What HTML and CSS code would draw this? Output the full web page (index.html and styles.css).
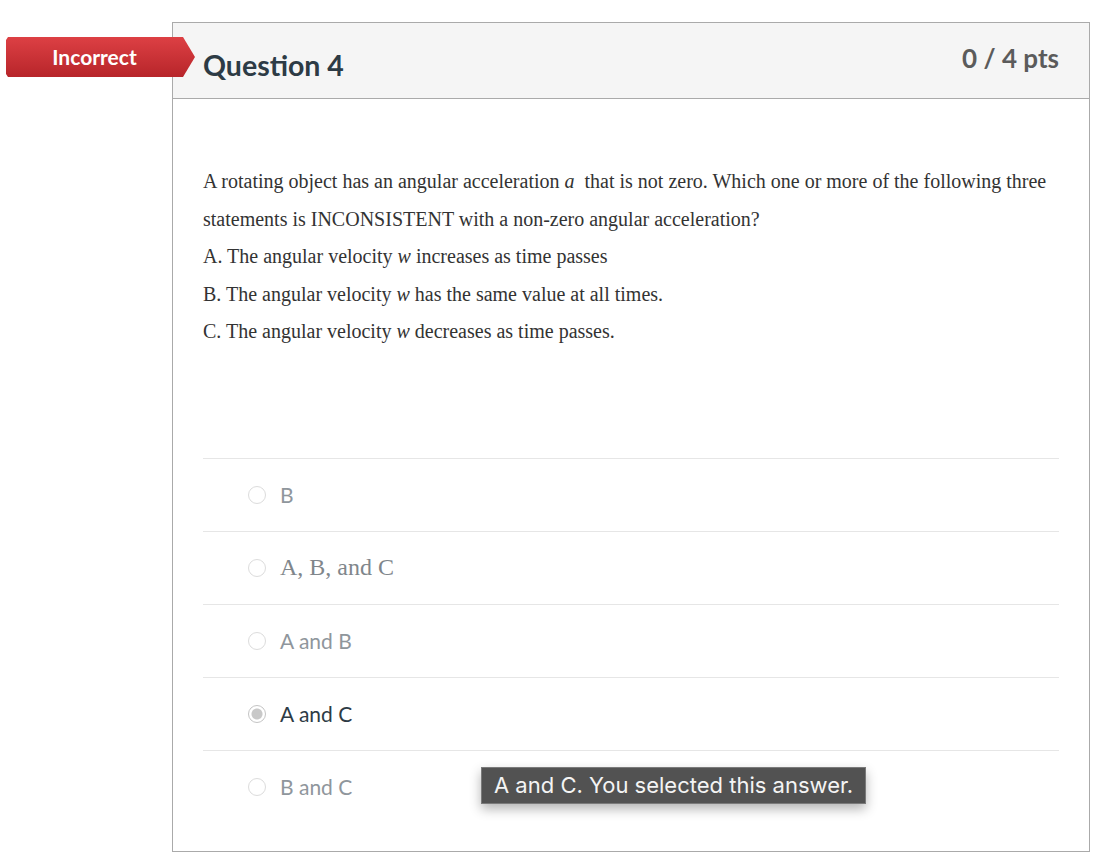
FILE: index.html
```html
<!DOCTYPE html>
<html lang="en">
<head>
    <meta charset="UTF-8">
    <title>Question 4</title>
    <link rel="stylesheet" href="styles.css">
</head>
<body>
    <div class="page">
        <div class="question">
            <div class="badge">Incorrect</div>
            <div class="question_header">
                <h2 class="question_title">Question 4</h2>
                <span class="question_points">0 / 4 pts</span>
            </div>
            <div class="question_body">
                <div class="question_text">
                    <p>A rotating object has an angular acceleration <i>a</i>&nbsp; that is not zero. Which one or more of the following three statements is INCONSISTENT with a non-zero angular acceleration?</p>
                    <p>A. The angular velocity <i>w</i> increases as time passes</p>
                    <p>B. The angular velocity <i>w</i> has the same value at all times.</p>
                    <p>C. The angular velocity <i>w</i> decreases as time passes.</p>
                </div>
                <div class="answers">
                    <div class="answer">
                        <span class="radio"></span>
                        <span class="answer_text">B</span>
                    </div>
                    <div class="answer">
                        <span class="radio"></span>
                        <span class="answer_text serif">A, B, and C</span>
                    </div>
                    <div class="answer">
                        <span class="radio"></span>
                        <span class="answer_text">A and B</span>
                    </div>
                    <div class="answer selected">
                        <span class="radio"></span>
                        <span class="answer_text">A and C</span>
                    </div>
                    <div class="answer">
                        <span class="radio"></span>
                        <span class="answer_text">B and C</span>
                        <div class="tooltip">A and C. You selected this answer.</div>
                    </div>
                </div>
            </div>
        </div>
    </div>
</body>
</html>
```

FILE: styles.css
```css
body {
    margin: 0;
    background: #fff;
    font-family: Lato, "Liberation Sans", sans-serif;
}

.page {
    padding: 22px 0 0 172px;
}

.question {
    position: relative;
    width: 916px;
    height: 828px;
    border: 1px solid #aaaaaa;
    background: #fff;
}

.badge {
    position: absolute;
    left: -167px;
    top: 14px;
    width: 177px;
    height: 40px;
    padding-right: 12px;
    line-height: 40px;
    text-align: center;
    color: #fff;
    font-size: 21px;
    font-weight: bold;
    background: linear-gradient(#dd4044, #b7252a);
    clip-path: polygon(0 3px, 2px 0, 177px 0, 189px 20px, 177px 40px, 2px 40px, 0 37px);
}

.question_header {
    display: flex;
    justify-content: space-between;
    height: 75px;
    padding: 0 30px;
    background: #f5f5f5;
    border-bottom: 1px solid #aaaaaa;
}

.question_title {
    margin: 0;
    margin-top: 25px;
    font-size: 28.5px;
    line-height: 34px;
    font-weight: bold;
    color: #2d3b45;
}

.question_points {
    margin-top: 19px;
    font-size: 26px;
    line-height: 32px;
    font-weight: bold;
    color: #5b5b5b;
}

.question_body {
    padding: 64px 30px 0 30px;
}

.question_text {
    font-family: "Liberation Serif", serif;
    font-size: 20px;
    line-height: 37.5px;
    color: #333;
}

.question_text p {
    margin: 0;
}

.answers {
    margin-top: 107px;
}

.answer {
    position: relative;
    display: flex;
    align-items: center;
    height: 72px;
    border-top: 1px solid #e6e6e6;
}

.radio {
    box-sizing: border-box;
    width: 18px;
    height: 18px;
    margin-left: 45px;
    margin-right: 14px;
    border: 1px solid #dcdcdc;
    border-radius: 50%;
    background: #fff;
}

.answer_text {
    font-size: 21px;
    color: #8f969c;
}

.answer_text.serif {
    font-family: "Liberation Serif", serif;
    font-size: 24px;
    color: #80868b;
}

.answer.selected .answer_text {
    color: #2d3b45;
}

.answer.selected .radio {
    border: 1px solid #c4c4c4;
    background: radial-gradient(circle, #c8c8c8 0 5px, #fff 6px);
}

.tooltip {
    position: absolute;
    left: 278px;
    top: 16px;
    height: 35px;
    line-height: 35px;
    padding: 0 12px;
    background: #525252;
    border: 1px solid #7a7a7a;
    color: #f4f4f4;
    font-family: Inter, "Liberation Sans", sans-serif;
    font-size: 22px;
    white-space: nowrap;
    box-shadow: 0 5px 12px rgba(0,0,0,0.3);
}
```
